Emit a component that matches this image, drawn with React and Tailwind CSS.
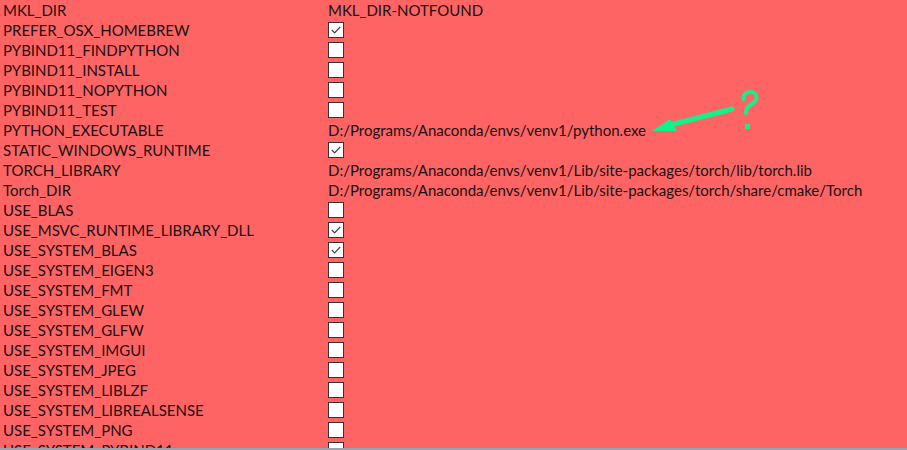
import React from "react";

const rows = [
  ["MKL_DIR", "MKL_DIR-NOTFOUND"],
  ["PREFER_OSX_HOMEBREW", true],
  ["PYBIND11_FINDPYTHON", false],
  ["PYBIND11_INSTALL", false],
  ["PYBIND11_NOPYTHON", false],
  ["PYBIND11_TEST", false],
  ["PYTHON_EXECUTABLE", "D:/Programs/Anaconda/envs/venv1/python.exe"],
  ["STATIC_WINDOWS_RUNTIME", true],
  ["TORCH_LIBRARY", "D:/Programs/Anaconda/envs/venv1/Lib/site-packages/torch/lib/torch.lib"],
  ["Torch_DIR", "D:/Programs/Anaconda/envs/venv1/Lib/site-packages/torch/share/cmake/Torch"],
  ["USE_BLAS", false],
  ["USE_MSVC_RUNTIME_LIBRARY_DLL", true],
  ["USE_SYSTEM_BLAS", true],
  ["USE_SYSTEM_EIGEN3", false],
  ["USE_SYSTEM_FMT", false],
  ["USE_SYSTEM_GLEW", false],
  ["USE_SYSTEM_GLFW", false],
  ["USE_SYSTEM_IMGUI", false],
  ["USE_SYSTEM_JPEG", false],
  ["USE_SYSTEM_LIBLZF", false],
  ["USE_SYSTEM_LIBREALSENSE", false],
  ["USE_SYSTEM_PNG", false],
  ["USE_SYSTEM_PYBIND11", false],
];

function Check({ on }) {
  return (
    <div className="w-[16px] h-[16px] bg-white border border-[#333333] flex items-center justify-center">
      {on && (
        <svg width="12" height="12" viewBox="0 0 12 12">
          <path d="M1.8 6 L4.6 8.8 L10.2 3" fill="none" stroke="#444" strokeWidth="1.2" />
        </svg>
      )}
    </div>
  );
}

export default function App() {
  return (
    <div className="w-[907px] h-[450px] flex flex-col overflow-hidden" style={{ fontFamily: 'Lato, sans-serif' }}>
      <div className="relative h-[448px] overflow-hidden bg-[#ff6464] text-[15px] text-[#1a1010]">
        {rows.map(([name, val]) => (
          <div key={name} className="h-[20px] flex items-center">
            <div className="w-[328px] shrink-0 pl-[3px] leading-[20px] whitespace-nowrap">{name}</div>
            <div className="leading-[20px] flex items-center whitespace-nowrap">
              {typeof val === "string" ? val : <Check on={val} />}
            </div>
          </div>
        ))}
        <svg className="absolute left-0 top-0" width="907" height="448" viewBox="0 0 907 448">
          <path d="M732 109 L670 125" stroke="#14f08a" strokeWidth="5" strokeLinecap="round" fill="none" />
          <path d="M652 131 L670 119 L677 131 Z" fill="#14f08a" />
          <path d="M743.5 99 C743.5 94 747 92 750.5 92 C754.5 92 757 94.5 756.5 98.5 C756 102.5 751 104 748.5 106.5 C746.5 108.5 746 110 746 113" stroke="#14f08a" strokeWidth="4" strokeLinecap="round" fill="none" />
          <rect x="745" y="124" width="5" height="5" rx="1" fill="#14f08a" />
        </svg>
      </div>
      <div className="h-[2px] bg-[#98a3ad]" />
    </div>
  );
}
